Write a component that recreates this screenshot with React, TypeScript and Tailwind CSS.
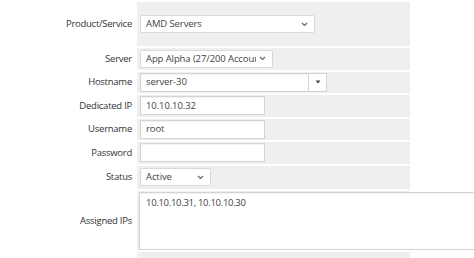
import React from 'react'

const font = { fontFamily: '"Open Sans", "Noto Sans", sans-serif' }

function Chevron() {
  return (
    <svg width="7" height="5" viewBox="0 0 7 5" className="shrink-0">
      <path d="M1 1 L3.5 3.5 L6 1" fill="none" stroke="#666" strokeWidth="1.2" />
    </svg>
  )
}

function Row({ label, children, tall }: { label: string; children: React.ReactNode; tall?: string }) {
  return (
    <div className={`flex ${tall ?? 'h-[22px]'}`}>
      <div className="w-[137px] shrink-0 flex items-center justify-end pr-[5px] text-[9.5px] tracking-[-0.25px] text-[#333]">
        {label}
      </div>
      <div className="w-[273px] shrink-0 bg-[#efefef] flex items-center pl-[3px]">{children}</div>
    </div>
  )
}

function Select({ value, width }: { value: string; width: string }) {
  return (
    <div
      className={`${width} h-[18px] bg-white border border-[#d9d9d9] rounded-[2px] flex items-center pl-[5px] pr-[6px] gap-[3px] text-[9.5px] tracking-[-0.1px] text-[#444] overflow-hidden`}
    >
      <span className="flex-1 whitespace-nowrap overflow-hidden">{value}</span>
      <Chevron />
    </div>
  )
}

function Input({ value, width }: { value?: string; width: string }) {
  return (
    <div
      className={`${width} h-[19px] bg-white border border-[#d4d4d4] shadow-[inset_0_1px_1px_rgba(0,0,0,0.06)] flex items-center pl-[5px] text-[9.5px] tracking-[-0.1px] text-[#444]`}
    >
      {value}
    </div>
  )
}

export default function App() {
  return (
    <div className="w-[474px] h-[258px] overflow-hidden bg-white pt-[2px] flex flex-col gap-[2px]" style={font}>
      <Row label="Product/Service" tall="h-[45px]">
        <Select value="AMD Servers" width="w-[175px]" />
      </Row>
      <Row label="Server">
        <Select value="App Alpha (27/200 Account" width="w-[133px]" />
      </Row>
      <Row label="Hostname">
        <div className="flex">
          <Input value="server-30" width="w-[169px]" />
          <div className="w-[18px] h-[19px] bg-white border border-l-0 border-[#d4d4d4] flex items-center justify-center">
            <svg width="6" height="4" viewBox="0 0 6 4">
              <path d="M0.5 0.5 L5.5 0.5 L3 3.5 Z" fill="#444" />
            </svg>
          </div>
        </div>
      </Row>
      <Row label="Dedicated IP">
        <Input value="10.10.10.32" width="w-[125px]" />
      </Row>
      <Row label="Username">
        <Input value="root" width="w-[125px]" />
      </Row>
      <Row label="Password">
        <Input width="w-[125px]" />
      </Row>
      <Row label="Status" tall="h-[24px]">
        <Select value="Active" width="w-[71px]" />
      </Row>
      <div className="flex h-[60px]">
        <div className="w-[137px] shrink-0 flex items-center justify-end pr-[5px] text-[9.5px] tracking-[-0.25px] text-[#333]">
          Assigned IPs
        </div>
        <div className="w-[273px] shrink-0 bg-[#efefef] pl-[2px] pt-[1px] overflow-visible">
          <div className="w-[340px] h-[58px] bg-white border border-[#d4d4d4] shadow-[inset_0_1px_1px_rgba(0,0,0,0.06)] px-[6px] pt-[3px] text-[9.5px] tracking-[-0.3px] text-[#444]">
            10.10.10.31, 10.10.10.30
          </div>
        </div>
      </div>
      <div className="flex h-[6px]">
        <div className="w-[137px] shrink-0" />
        <div className="w-[273px] shrink-0 bg-[#efefef]" />
      </div>
    </div>
  )
}
